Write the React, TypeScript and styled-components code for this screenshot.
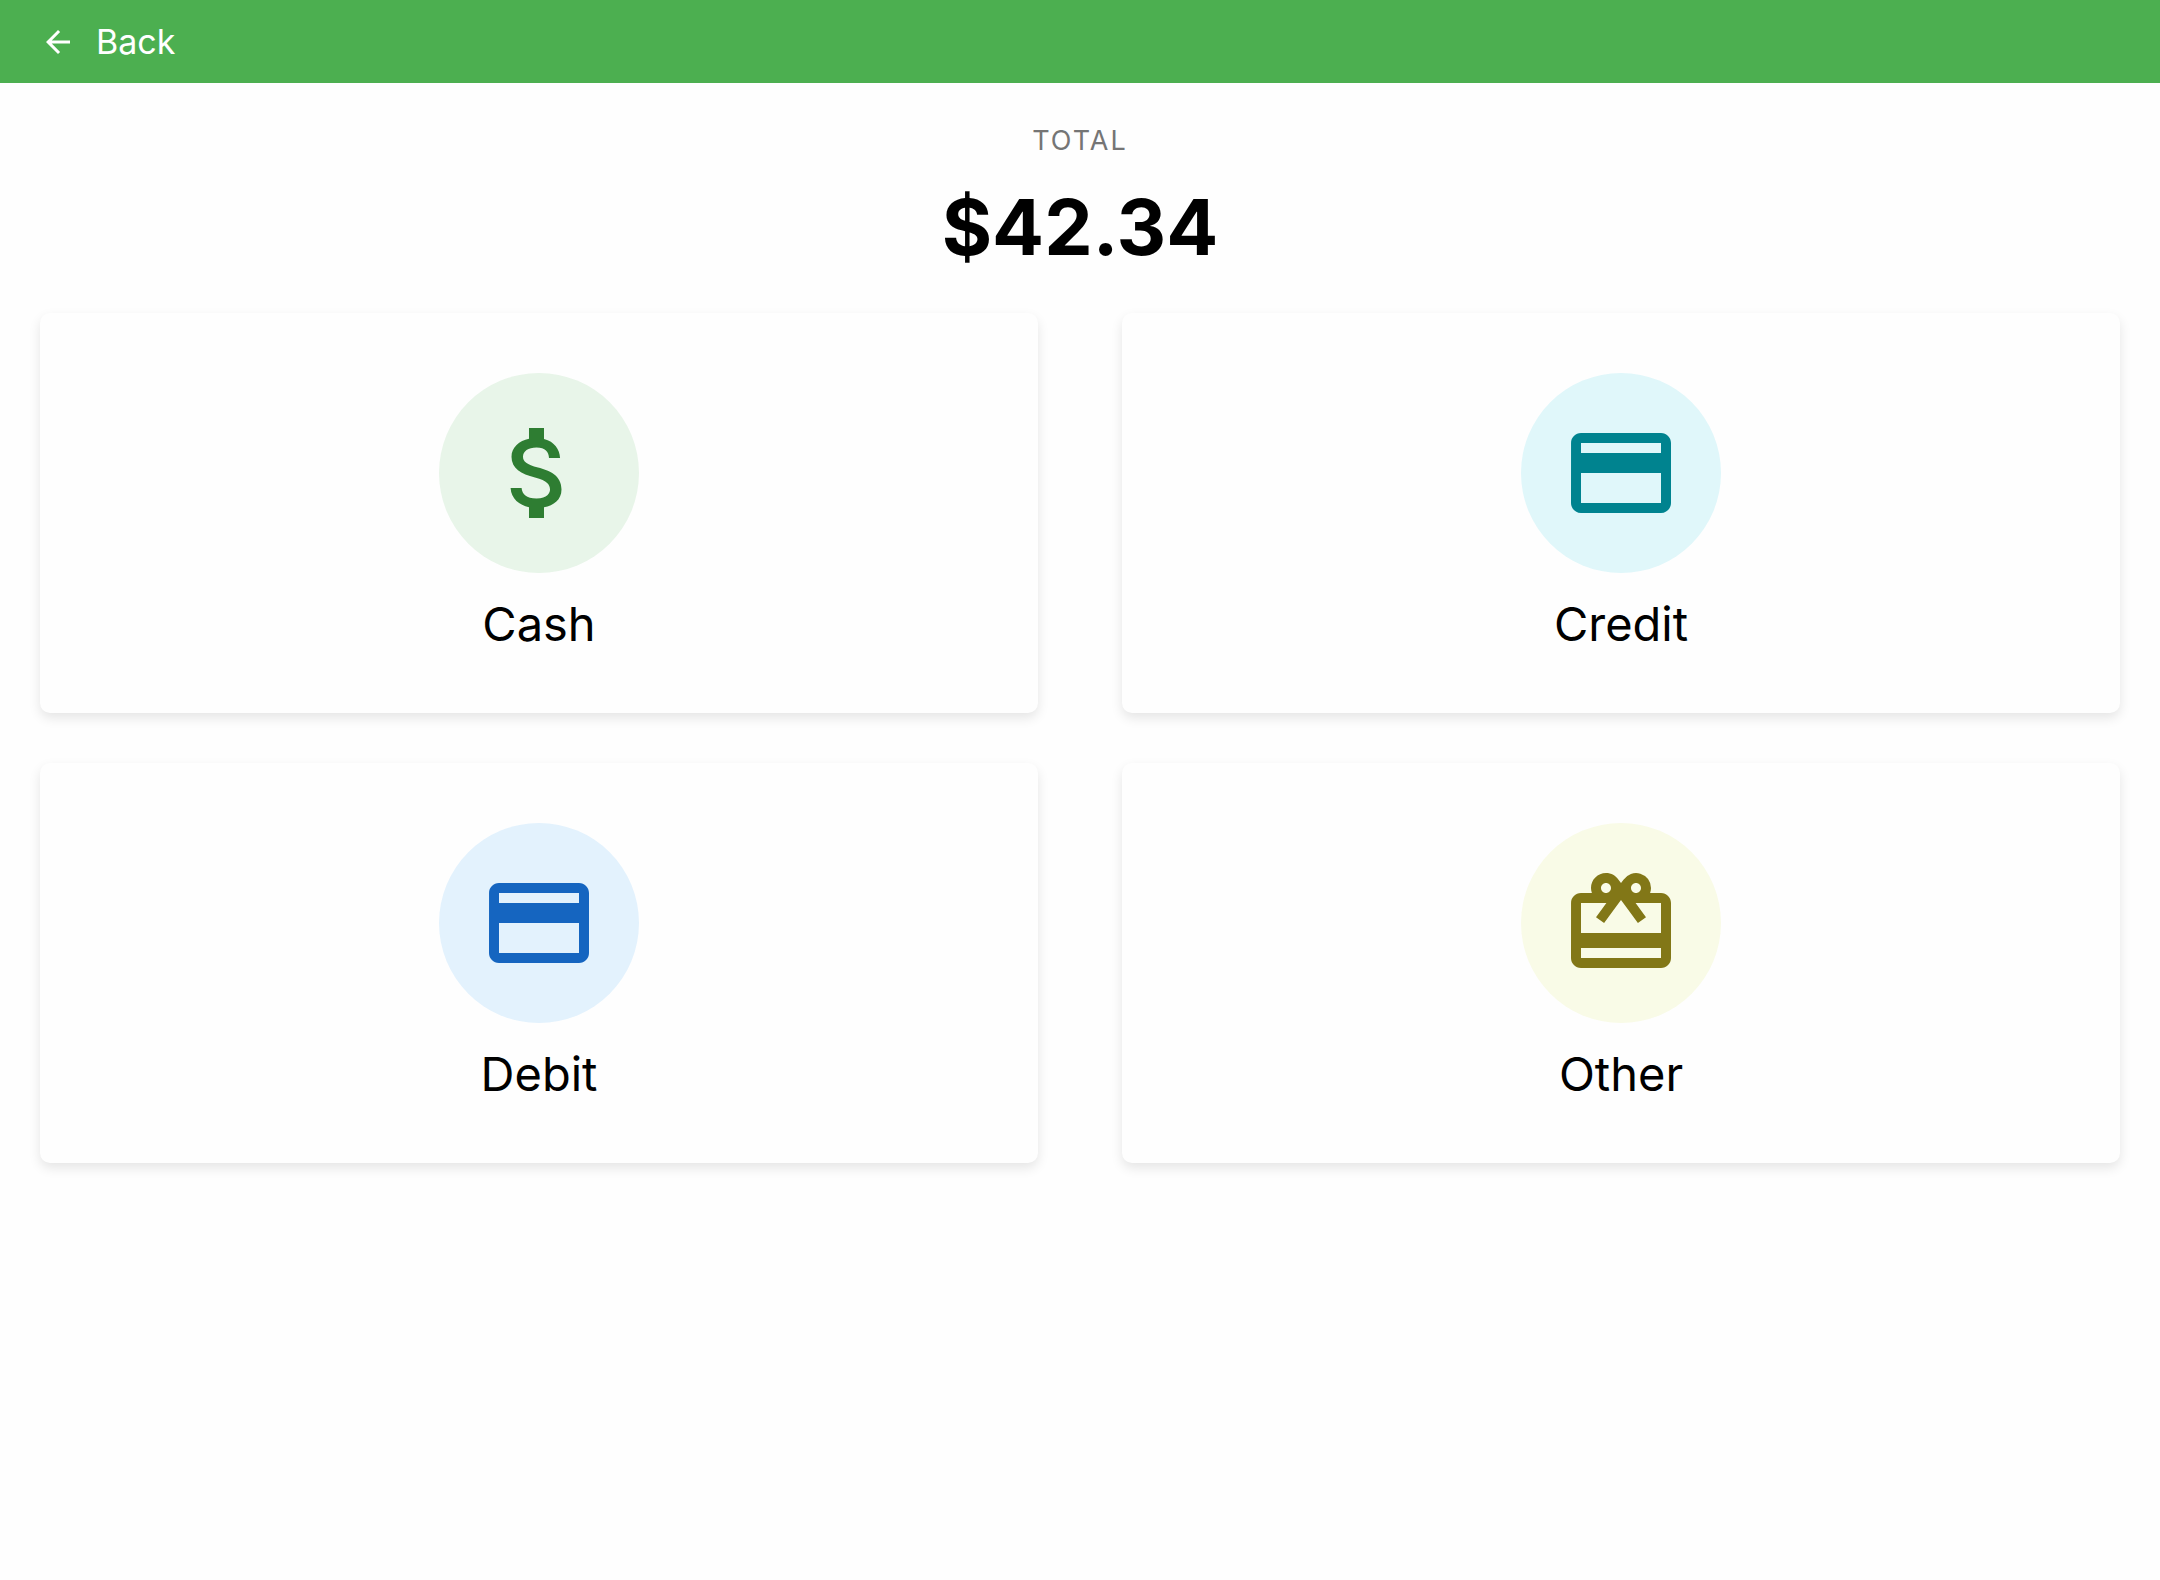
import React from "react";
import styled, { createGlobalStyle } from "styled-components";
import type { IconType } from "react-icons";
import { MdArrowBack, MdAttachMoney, MdCardGiftcard, MdPayment } from "react-icons/md";

const GlobalStyle = createGlobalStyle`
  *, *::before, *::after {
    box-sizing: border-box;
  }

  body {
    margin: 0;
    background: #fefefe;
    color: #000;
    font-family: Inter, "Liberation Sans", sans-serif;
  }
`;

const TopBar = styled.header`
  display: flex;
  align-items: center;
  height: 83px;
  padding: 0 40px;
  background: #4caf50;
`;

const BackButton = styled.button`
  display: flex;
  align-items: center;
  gap: 20px;
  padding: 0;
  border: 0;
  background: none;
  color: #fff;
  font: inherit;
  font-size: 34px;
  line-height: 44px;
  cursor: pointer;

  svg {
    width: 36px;
    height: 36px;
  }
`;

const Summary = styled.section`
  display: flex;
  flex-direction: column;
  align-items: center;
  padding: 40px 40px 36px;
`;

const SummaryLabel = styled.h1`
  margin: 0;
  color: #757575;
  font-size: 27px;
  font-weight: 400;
  line-height: 36px;
  letter-spacing: 2px;
  text-transform: uppercase;
`;

const Amount = styled.p`
  margin: 18px 0 0;
  font-size: 77px;
  font-weight: 700;
  line-height: 100px;
`;

const MethodGrid = styled.main`
  display: grid;
  grid-template-columns: repeat(2, minmax(0, 1fr));
  gap: 50px 84px;
  padding: 0 40px 40px;
`;

const MethodCard = styled.button`
  display: flex;
  flex-direction: column;
  align-items: center;
  gap: 20px;
  padding: 60px 20px 58px;
  border: 0;
  border-radius: 10px;
  background: #fefefe;
  box-shadow: 0 5px 12px rgba(0, 0, 0, 0.1);
  color: inherit;
  font: inherit;
  font-size: 47px;
  line-height: 62px;
  cursor: pointer;
`;

const IconCircle = styled.span<{ $tint: string; $color: string }>`
  display: grid;
  place-items: center;
  width: 200px;
  height: 200px;
  border-radius: 50%;
  background: ${({ $tint }) => $tint};
  color: ${({ $color }) => $color};

  svg {
    width: 120px;
    height: 120px;
  }
`;

interface Method {
  name: string;
  icon: IconType;
  tint: string;
  color: string;
}

const methods: Method[] = [
  { name: "Cash", icon: MdAttachMoney, tint: "#e8f5e9", color: "#2e7d32" },
  { name: "Credit", icon: MdPayment, tint: "#e0f7fa", color: "#00838f" },
  { name: "Debit", icon: MdPayment, tint: "#e3f2fd", color: "#1565c0" },
  { name: "Other", icon: MdCardGiftcard, tint: "#f9fbe7", color: "#827717" },
];

export default function App() {
  return (
    <>
      <GlobalStyle />
      <TopBar>
        <BackButton type="button">
          <MdArrowBack aria-hidden="true" />
          Back
        </BackButton>
      </TopBar>
      <Summary>
        <SummaryLabel>Total</SummaryLabel>
        <Amount>$42.34</Amount>
      </Summary>
      <MethodGrid>
        {methods.map(({ name, icon: Icon, tint, color }) => (
          <MethodCard key={name} type="button">
            <IconCircle $tint={tint} $color={color}>
              <Icon aria-hidden="true" />
            </IconCircle>
            {name}
          </MethodCard>
        ))}
      </MethodGrid>
    </>
  );
}
